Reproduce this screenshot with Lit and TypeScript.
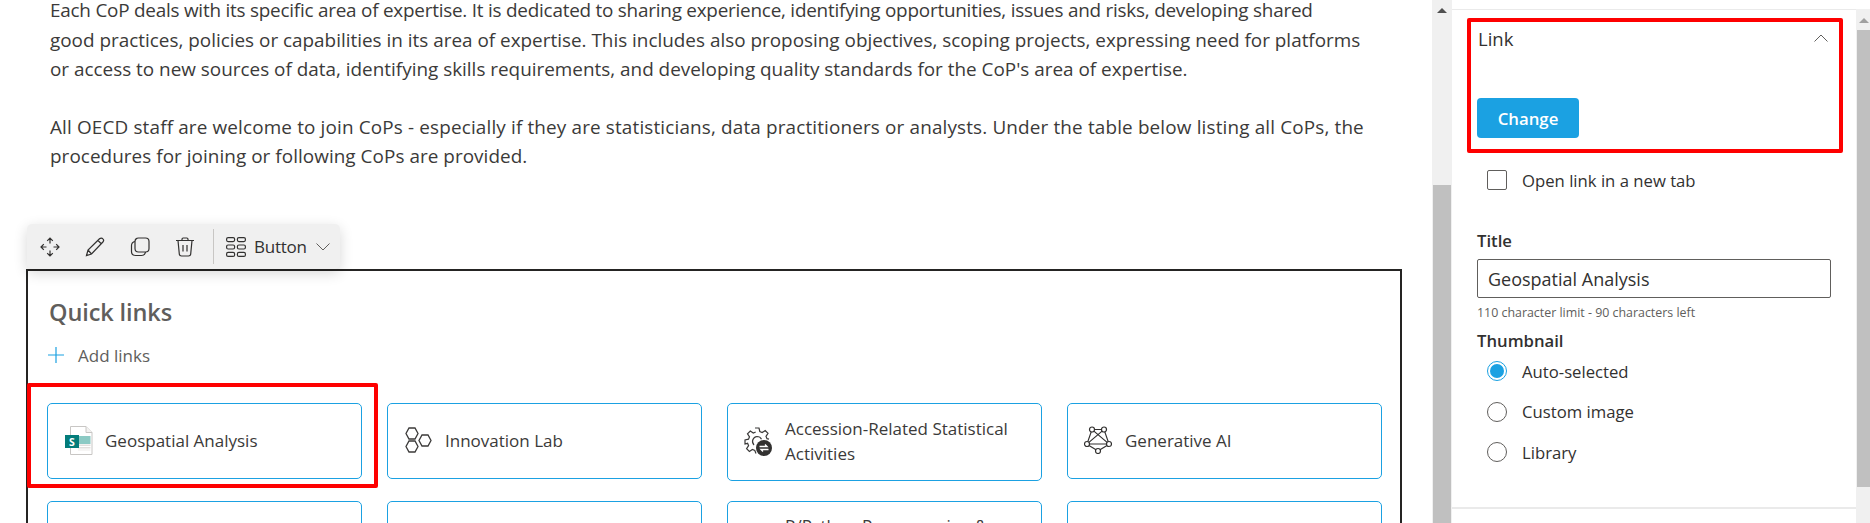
import { LitElement, html, css, svg } from "lit";
import { customElement } from "lit/decorators.js";

const ic = (w: number, h: number, body: unknown) => html`<svg width=${w} height=${h} viewBox="0 0 ${w} ${h}" fill="none" stroke="#323130" stroke-width="1.2">${body}</svg>`;

const moveIcon = ic(20, 20, svg`<path d="M10 1v5.500M10 13.500V19M1 10h5.500M13.500 10H19M7.200 3.800 10 1l2.800 2.800M7.200 16.200 10 19l2.800-2.800M3.800 7.200 1 10l2.800 2.800M16.200 7.200 19 10l-2.800 2.800"/>`);
const penIcon = ic(20, 20, svg`<path d="M1.500 18.500 3 13 14.500 1.800c1-1 2.600-1 3.400 0 .9.900.8 2.300 0 3.200L6.500 17zM3 13l3.500 4M13 3.500l3.500 3.500"/>`);
const copyIcon = ic(20, 20, svg`<rect x="5" y="1" width="14" height="14" rx="3.500"/><path d="M5 4.500C2.500 5 1.500 6.500 1.500 8.500v6c0 2.500 1.500 4 4 4h6c2 0 3.500-1 4-3.500"/>`);
const trashIcon = ic(20, 20, svg`<path d="M1 3.500h18M7 3.500V2.200C7 1.500 7.500 1 8.200 1h3.600c.7 0 1.200.5 1.200 1.200v1.300M3 3.500l1.300 13.500c.1 1.200 1 2 2.200 2h7c1.200 0 2.100-.8 2.200-2L17 3.500M8 8v6.500M12 8v6.500"/>`);
const gridIcon = ic(20, 20, svg`<rect x=".6" y=".6" width="8" height="4" rx="1.500"/><rect x="11.400" y=".6" width="8" height="4" rx="1.500"/><rect x=".6" y="8" width="8" height="4" rx="1.500"/><rect x="11.400" y="8" width="8" height="4" rx="1.500"/><rect x=".6" y="15.400" width="8" height="4" rx="1.500"/><rect x="11.400" y="15.400" width="8" height="4" rx="1.500"/>`);
const chevron = (cls: string, up = false) => html`<svg class=${cls} width="14" height="8" viewBox="0 0 14 8" fill="none" stroke="#605e5c" stroke-width="1"><path d=${up ? "M.5 7.500 7 1l6.500 6.500" : "M.5.5 7 7 13.500.5"}/></svg>`;

const spIcon = html`<svg width="28" height="29" viewBox="-1 0 28 29" fill="none" overflow="visible">
  <path d="M5.500 .5H21l6 6v22H5.500z" fill="#fff" stroke="#c8c6c4"/><path d="M21 .5v6h6" fill="#f3f2f1" stroke="#c8c6c4"/>
  <rect x="13" y="10" width="12.500" height="8" fill="#8ccac4"/><rect x="13" y="18.500" width="12.500" height="1.500" fill="#e1dfdd"/><rect x="13" y="21" width="12.500" height="1.500" fill="#e1dfdd"/><rect x="13" y="23.500" width="12.500" height="1" fill="#edebe9"/>
  <rect x="0" y="9" width="14" height="13" fill="#037c7a"/>
  <text x="7" y="19.500" text-anchor="middle" font-family="Open Sans, sans-serif" font-weight="700" font-size="10.500" fill="#fff">S</text></svg>`;
const hexIcon = html`<svg width="27" height="27" viewBox="0 0 27 27" fill="none" stroke="#3b3a39" stroke-width="1.300">
  <path d="M4 1h6l3 5.500-3 5.500H4L1 6.500zM17 8h6l3 5.500L23 19h-6l-3-5.500zM4 14h6l3 5.500-3 5.500H4l-3-5.500z"/></svg>`;
const gearIcon = html`<svg width="28" height="29" viewBox="0 0 28 29" fill="none">
  <path d="M11 1h4l.8 3.500 2.400 1 3-2 2.800 2.800-2 3 1 2.400 2 .5M12 26.500l-1.200-3-2.400-1-3 2-2.800-2.800 2-3-1-2.400L1 17v-4l3.500-.8 1-2.400-2-3 2.800-2.800 3 2 2.400-1" stroke="#3b3a39" stroke-width="1.200"/>
  <path d="M10 18a5 5 0 0 1 3-8.500c2 0 3.700 1.100 4.500 2.800" stroke="#3b3a39" stroke-width="1.200"/>
  <circle cx="20" cy="21" r="8" fill="#323130"/><path d="M15.500 19.500h7.500l-2-2M24.500 22.500H17l2 2" stroke="#fff" stroke-width="1.300"/></svg>`;
const aiIcon = html`<svg width="28" height="28" viewBox="0 0 28 28" fill="none" stroke="#323130" stroke-width="1.200">
  <circle cx="8" cy="3.500" r="2.500"/><circle cx="20" cy="3.500" r="2.500"/><circle cx="3" cy="18" r="2.500"/><circle cx="25" cy="18" r="2.500"/><circle cx="14" cy="25" r="2.500"/>
  <path d="M10.500 3.500h7M7.200 5.900 3.800 15.600M20.800 5.900l3.400 9.700M5 19.500l7 4.200M23 19.500l-7 4.200M5.500 18h17M9.900 5.100l13.200 11.300M18.100 5.100 4.900 16.400"/></svg>`;

interface Card { icon: unknown; label: string }
const cards: Card[] = [
  { icon: spIcon, label: "Geospatial Analysis" },
  { icon: hexIcon, label: "Innovation Lab" },
  { icon: gearIcon, label: "Accession-Related Statistical Activities" },
  { icon: aiIcon, label: "Generative AI" },
];

@customElement("app-root")
export class AppRoot extends LitElement {
  static styles = css`
    :host { display: block; width: 1870px; height: 523px; overflow: hidden; position: relative; background: #fff;
      font-family: "Open Sans", "Noto Sans", sans-serif; color: #323130; }
    .page { display: grid; grid-template-columns: 1432px 1fr 14px; height: 523px; }
    .main { overflow: hidden; padding: 0 0 0 26px; position: relative; }
    .text { padding-left: 24px; font-size: 18.900px; line-height: 29.500px; white-space: nowrap; margin-top: -4px; color: #3b3a39; }
    .text p { margin: 0 0 28px; }
    .text span { display: block; }
    .l1 { letter-spacing: -.23px; }
    .l4 { letter-spacing: .15px; }
    .l5 { letter-spacing: .05px; }
    .toolbar { position: absolute; left: 27px; top: 224px; width: 313px; height: 45px; background: #f0f0f0; border-radius: 5px;
      box-shadow: 0 4px 14px rgba(0,0,0,.16); display: flex; align-items: center; padding-left: 13px; box-sizing: border-box; z-index: 2; }
    .tool { width: 20px; height: 20px; margin-right: 25px; display: flex; }
    .tool:nth-child(4) { margin-right: 18px; }
    .sep { width: 1px; height: 35px; background: #c8c6c4; margin-right: 12px; }
    .tool.grid { margin-right: 8px; }
    .btnlabel { font-size: 17px; letter-spacing: -.25px; color: #323130; }
    .tbchev { margin-left: 9px; }
    .canvas { position: absolute; left: 26px; top: 269px; width: 1376px; height: 300px; border: 2px solid #252423; box-sizing: border-box; padding: 0 0 0 19px; }
    .h { font-size: 23.500px; font-weight: 600; letter-spacing: -.1px; color: #605e5c; margin: 25px 0 0 2px; line-height: 32px; }
    .add { display: flex; align-items: center; gap: 13px; margin-top: 15px; height: 24px; font-size: 17px; color: #605e5c; }
    .grid4 { display: grid; grid-template-columns: repeat(4, 315px); column-gap: 25px; row-gap: 20px; margin-top: 36px; align-items: start; }
    .card { border: 1px solid #1ba1e2; border-radius: 5px; min-height: 76px; box-sizing: border-box; display: flex; align-items: center; padding: 0 12px 0 16px; background: #fff; gap: 13px; }
    .card.tall { min-height: 78px; }
    .card.empty { height: 76px; }
    .card.top { align-items: flex-start; padding-top: 12px; }
    .ci { width: 28px; display: flex; justify-content: center; flex: none; margin-top: -2px; }
    .cl { font-size: 17px; font-weight: 500; line-height: 25px; color: #3b3a39; position: relative; top: -1px; }
    .red { position: absolute; border: 4px solid #fe0000; border-radius: 2px; box-sizing: border-box; z-index: 3; pointer-events: none; }
    .red.a { left: 27px; top: 383px; width: 351px; height: 105px; }
    .red.b { left: 1467px; top: 18px; width: 376px; height: 135px; }
    .sb1 { position: absolute; left: 1432px; top: 0; bottom: 0; width: 20px; background: #f0f0f0; }
    .sb1 .thumb { position: absolute; left: 1px; right: 1px; top: 185px; bottom: 0; background: #c0c0c0; }
    .arrow { position: absolute; width: 0; height: 0; border-left: 5px solid transparent; border-right: 5px solid transparent; border-bottom: 5px solid #505050; }
    .sb1 .arrow { left: 5px; top: 8px; }
    .panel { grid-column: 2; margin-left: 20px; border-top: 1.500px solid #eaeaea; margin-top: 9px; position: relative; padding: 9px 26px 0 25px; background: #fff; }
    .link-row { display: flex; justify-content: space-between; align-items: center; height: 26px; padding: 0 3px 0 1px; margin-top: 6px; font-size: 18.500px; color: #323130; }
    .change { display: flex; align-items: center; justify-content: center; width: 102px; height: 40px; margin-top: 47px; background: #1ba1e2; color: #fff; border-radius: 4px; font-size: 16.800px; font-weight: 600; }
    .row { display: flex; align-items: center; gap: 15px; padding-left: 10px; height: 24px; font-size: 16.700px; color: #323130; }
    .cb { width: 20px; height: 20px; border: 1px solid #605e5c; border-radius: 2px; box-sizing: border-box; flex: none; }
    .check { margin-top: 30px; }
    .lab { font-size: 16.700px; font-weight: 600; color: #323130; line-height: 22px; }
    .title { margin-top: 38px; }
    .input { margin-top: 7px; width: 354px; height: 39px; border: 1px solid #605e5c; border-radius: 2px; box-sizing: border-box; display: flex; align-items: center; padding-left: 10px; font-size: 18px; color: #323130; }
    .hint { font-size: 12.400px; color: #605e5c; line-height: 16px; margin-top: 7px; }
    .thumbl { margin-top: 9px; }
    .radios { display: flex; flex-direction: column; gap: 16.500px; margin-top: 7px; }
    .rd { width: 20px; height: 20px; border: 1px solid #605e5c; border-radius: 50%; box-sizing: border-box; flex: none; display: flex; align-items: center; justify-content: center; }
    .rd.on { border-color: #1ba1e2; }
    .rd.on::after { content: ""; width: 14px; height: 14px; border-radius: 50%; background: #1ba1e2; }
    .panel-foot { position: absolute; left: 0; right: 0; top: 497px; height: 1.500px; background: #eaeaea; }
    .sb2 { position: absolute; right: 0; top: 9px; bottom: 0; width: 14px; background: #f0f0f0; }
    .sb2 .thumb { position: absolute; left: 1px; right: 0; top: 21px; height: 457px; background: #c0c0c0; }
    .sb2 .arrow { left: 3px; top: 9px; border-bottom-color: #a0a0a0; }
  `;

  render() {
    return html`<div class="page">
      <div class="main">
        <div class="text">
          <p><span class="l1">Each CoP deals with its specific area of expertise. It is dedicated to sharing experience, identifying opportunities, issues and risks, developing shared</span><span>good practices, policies or capabilities in its area of expertise. This includes also proposing objectives, scoping projects, expressing need for platforms</span><span>or access to new sources of data, identifying skills requirements, and developing quality standards for the CoP's area of expertise.</span></p>
          <p><span class="l4">All OECD staff are welcome to join CoPs - especially if they are statisticians, data practitioners or analysts. Under the table below listing all CoPs, the</span><span class="l5">procedures for joining or following CoPs are provided.</span></p>
        </div>
        <div class="toolbar">
          <span class="tool">${moveIcon}</span><span class="tool">${penIcon}</span><span class="tool">${copyIcon}</span><span class="tool">${trashIcon}</span>
          <span class="sep"></span><span class="tool grid">${gridIcon}</span><span class="btnlabel">Button</span>${chevron("tbchev")}
        </div>
        <div class="canvas">
          <div class="h">Quick links</div>
          <div class="add"><svg width="18" height="18" viewBox="0 0 18 18" stroke="#1ba1e2" stroke-width="1.200"><path d="M9 1v16M1 9h16"/></svg><span>Add links</span></div>
          <div class="grid4">
            ${cards.map((c, i) => html`<div class="card ${i === 2 ? "tall" : ""}"><span class="ci">${c.icon}</span><span class="cl">${c.label}</span></div>`)}
            <div class="card empty"></div><div class="card empty"></div>
            <div class="card empty top"><span class="ci"></span><span class="cl">R/Python Programming &amp;</span></div>
            <div class="card empty"></div>
          </div>
        </div>
      </div>
      <div class="panel">
        <div class="link-row"><span>Link</span>${chevron("", true)}</div>
        <div class="change">Change</div>
        <div class="row check"><span class="cb"></span><span>Open link in a new tab</span></div>
        <div class="lab title">Title</div>
        <div class="input">Geospatial Analysis</div>
        <div class="hint">110 character limit - 90 characters left</div>
        <div class="lab thumbl">Thumbnail</div>
        <div class="radios">
          <div class="row"><span class="rd on"></span><span>Auto-selected</span></div>
          <div class="row"><span class="rd"></span><span>Custom image</span></div>
          <div class="row"><span class="rd"></span><span>Library</span></div>
        </div>
        <div class="panel-foot"></div>
      </div>
    </div>
    <div class="sb1"><span class="arrow"></span><div class="thumb"></div></div>
    <div class="sb2"><span class="arrow"></span><div class="thumb"></div></div>
    <div class="red a"></div><div class="red b"></div>`;
  }
}
